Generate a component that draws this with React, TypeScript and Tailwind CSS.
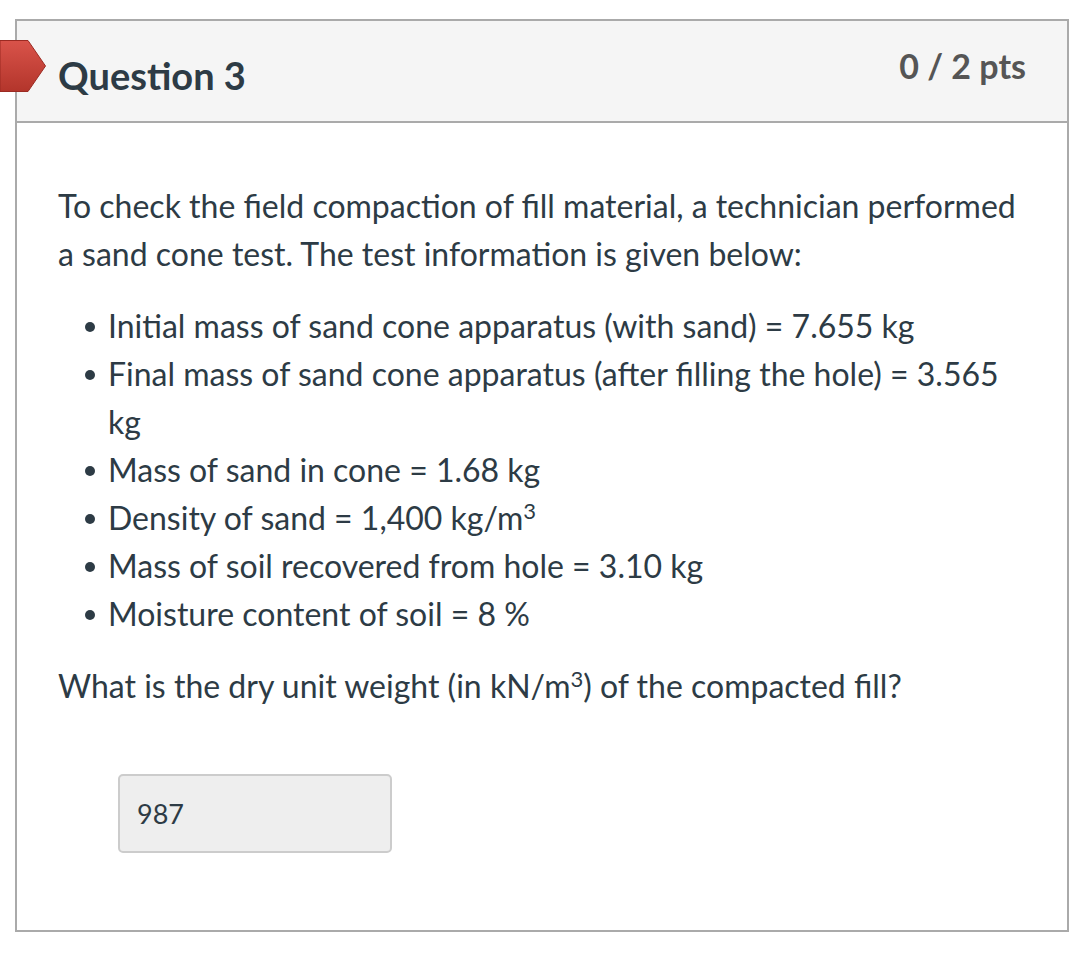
const items = [
  <>Initial mass of sand cone apparatus (with sand) = 7.655 kg</>,
  <>Final mass of sand cone apparatus (after filling the hole) = 3.565 kg</>,
  <>Mass of sand in cone = 1.68 kg</>,
  <>
    Density of sand = 1,400 kg/m<sup className="text-[22px]">3</sup>
  </>,
  <>Mass of soil recovered from hole = 3.10 kg</>,
  <>Moisture content of soil = 8 %</>,
];

export default function App() {
  return (
    <div className="relative min-h-[955px] w-[1090px] bg-white pt-[19px] text-[#2d3b45]" style={{ fontFamily: "Lato, 'Noto Sans', sans-serif" }}>
      {/* question flag */}
      <div className="absolute left-0 top-[40px] h-[52px] w-[46px]">
        <svg width="46" height="52" viewBox="0 0 46 52">
          <defs>
            <linearGradient id="flag" x1="0" y1="0" x2="0" y2="1">
              <stop offset="0" stopColor="#d9534a" />
              <stop offset="1" stopColor="#b3352b" />
            </linearGradient>
          </defs>
          <path d="M0 0.5 H28 L45.5 26 L28 51.5 H0 Z" fill="url(#flag)" stroke="#9b2a22" strokeWidth="1" />
        </svg>
      </div>

      <div className="ml-[15px] flex h-[913px] w-[1054px] flex-col border-2 border-[#aaaaaa]">
        <div className="flex h-[102px] items-start justify-between border-b-2 border-[#aaaaaa] bg-[#f5f5f5] pl-[41px] pr-[41px]">
          <h2 className="mt-[30px] text-[38px] font-bold leading-[48px]">Question 3</h2>
          <div className="mt-[21px] text-[34px] font-bold leading-[48px] text-[#555555]">0 / 2 pts</div>
        </div>

        <div className="px-[41px] pt-[59px] text-[32px] leading-[48px]">
          <p>
            To check the field compaction of fill material, a technician performed a sand cone test. The test information is given below:
          </p>
          <ul className="mt-[24px]">
            {items.map((item, i) => (
              <li key={i} className="flex">
                <span className="flex h-[48px] w-[50px] shrink-0 items-center justify-end pr-[13px] pt-[2px]">
                  <span className="h-[10px] w-[10px] rounded-full bg-[#2d3b45]" />
                </span>
                <span>{item}</span>
              </li>
            ))}
          </ul>
          <p className="mt-[24px]">
            What is the dry unit weight (in kN/m<sup className="text-[22px]">3</sup>) of the compacted fill?
          </p>

          <div className="ml-[60px] mt-[64px] flex h-[79px] w-[274px] items-center rounded-[5px] border-2 border-[#cccccc] bg-[#eeeeee] pl-[17px] text-[27px]">
            987
          </div>
        </div>
      </div>
    </div>
  );
}
